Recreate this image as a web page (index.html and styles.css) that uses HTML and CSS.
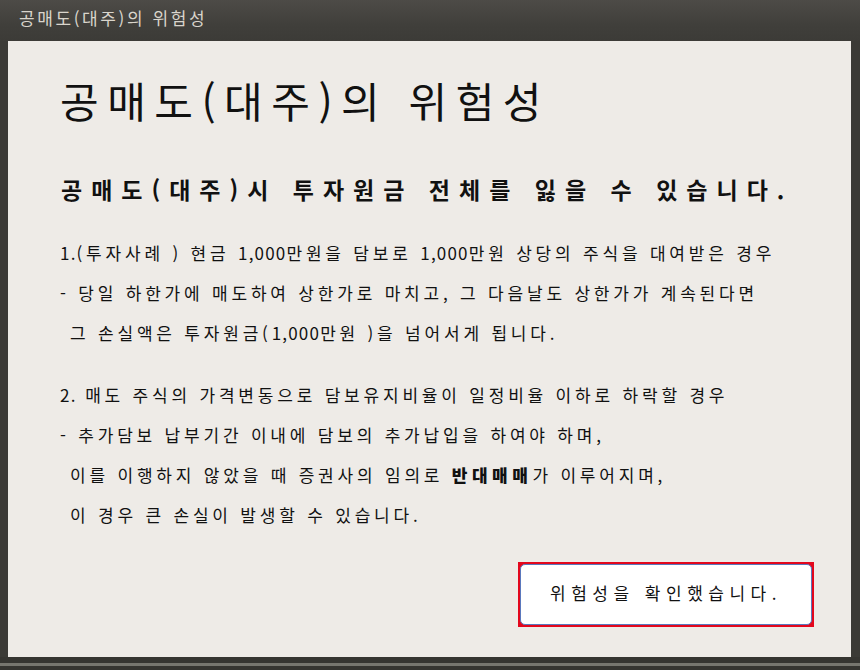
FILE: index.html
```html
<!DOCTYPE html>
<html lang="ko">
<head>
<meta charset="utf-8">
<title>공매도(대주)의 위험성</title>
<link rel="stylesheet" href="styles.css">
</head>
<body>
<div class="window">
  <div class="titlebar">공매도(대주)의 위험성</div>
  <div class="panel">
    <h1 class="heading">공매도(대주)의 위험성</h1>
    <h2 class="subheading">공매도(대주)시 투자원금 전체를 잃을 수 있습니다.</h2>
    <div class="section">
      <p class="line"><span class="num">1.</span>(투자사례 ) 현금 <span class="num">1,000</span>만원을 담보로 <span class="num">1,000</span>만원 상당의 주식을 대여받은 경우</p>
      <p class="line">- 당일 하한가에 매도하여 상한가로 마치고, 그 다음날도 상한가가 계속된다면</p>
      <p class="line indent">그 손실액은 투자원금(<span class="num">1,000</span>만원 )을 넘어서게 됩니다.</p>
    </div>
    <div class="section second">
      <p class="line"><span class="num">2.</span> 매도 주식의 가격변동으로 담보유지비율이 일정비율 이하로 하락할 경우</p>
      <p class="line">- 추가담보 납부기간 이내에 담보의 추가납입을 하여야 하며,</p>
      <p class="line indent">이를 이행하지 않았을 때 증권사의 임의로 <strong>반대매매</strong>가 이루어지며,</p>
      <p class="line indent">이 경우 큰 손실이 발생할 수 있습니다.</p>
    </div>
    <div class="actions">
      <button class="confirm" type="button"><span class="confirm-face">위험성을 확인했습니다.</span></button>
    </div>
  </div>
  <div class="bottom"><div class="bottom-line"></div></div>
</div>
</body>
</html>
```
FILE: styles.css
```css
* { box-sizing: border-box; }
html, body { margin: 0; padding: 0; }
body {
  background: #3a3935;
  font-family: "Noto Sans CJK KR", "Noto Sans", sans-serif;
  color: #111;
}
.window {
  width: 860px;
  height: 670px;
  display: flex;
  flex-direction: column;
  background: #3b3a36;
}
.titlebar {
  height: 41px;
  flex: none;
  padding: 6px 0 0 19px;
  font-size: 17px;
  line-height: 24px;
  letter-spacing: 2.6px;
  color: #d9d5cc;
  background: linear-gradient(#4d4b47, #403f3b 60%, #3c3b37);
}
.panel {
  height: 616px;
  flex: none;
  margin: 0 9px 0 8px;
  background: #eeebe7;
  padding: 33px 0 0 52px;
  display: flex;
  flex-direction: column;
}
.heading {
  margin: 0;
  font-size: 42px;
  font-weight: normal;
  line-height: 52px;
  letter-spacing: 8.5px;
}
.subheading {
  margin: 48px 0 0 1px;
  font-size: 23px;
  font-weight: bold;
  line-height: 30px;
  letter-spacing: 9px;
}
.section {
  margin-top: 29px;
}
.section.second {
  margin-top: 22px;
}
.line {
  margin: 0;
  font-size: 17px;
  line-height: 40px;
  letter-spacing: 3.8px;
  white-space: nowrap;
}
.line .num {
  letter-spacing: 1.2px;
}
.line.indent {
  padding-left: 10px;
}
.line strong {
  font-weight: 900;
  letter-spacing: 4.5px;
}
.actions {
  display: flex;
  justify-content: flex-end;
  padding-right: 37px;
  margin-top: 27px;
}
.confirm {
  width: 296px;
  height: 65px;
  border: none;
  background: #e3071d;
  padding: 2px;
  font-family: inherit;
  font-size: 17px;
  letter-spacing: 5.5px;
  color: #111;
  border-radius: 0;
  display: flex;
}
.confirm-face {
  flex: 1;
  display: flex;
  align-items: center;
  justify-content: center;
  padding-bottom: 4px;
  background: #fff;
  border: 1px solid #5a78bd;
  border-radius: 5px;
}
.bottom {
  flex: 1;
  background: #363531;
  padding-top: 6px;
}
.bottom-line {
  height: 3px;
  background: #77766f;
}
```
